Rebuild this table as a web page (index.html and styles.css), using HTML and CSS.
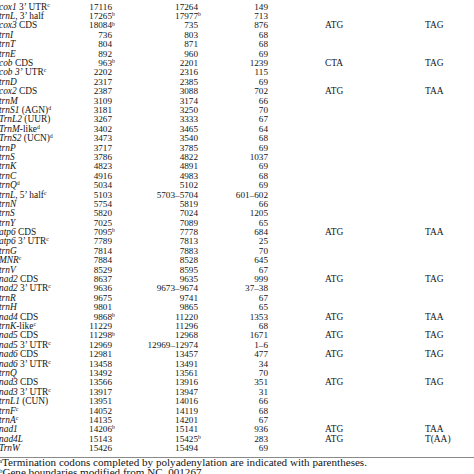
FILE: index.html
```html
<!DOCTYPE html>
<html lang="en">
<head>
<meta charset="utf-8">
<title>Mitochondrial genome annotation</title>
<link rel="stylesheet" href="styles.css">
</head>
<body>
<div class="sheet">
  <div class="genes">
    <div class="row"><span class="name"><i>cox1</i> CDS</span><span class="n">15475</span><span class="n">17115</span><span class="n">1641</span><span class="init">TTG</span><span class="term">TAG</span></div>
    <div class="row"><span class="name"><i>cox1</i> 3’ UTR<sup>c</sup></span><span class="n">17116</span><span class="n">17264</span><span class="n">149</span></div>
    <div class="row"><span class="name"><i>trnL</i>, 3’ half</span><span class="n">17265<sup>b</sup></span><span class="n">17977<sup>b</sup></span><span class="n">713</span></div>
    <div class="row"><span class="name"><i>cox3</i> CDS</span><span class="n">18084<sup>b</sup></span><span class="n">735</span><span class="n">876</span><span class="init">ATG</span><span class="term">TAG</span></div>
    <div class="row"><span class="name"><i>trnI</i></span><span class="n">736</span><span class="n">803</span><span class="n">68</span></div>
    <div class="row"><span class="name"><i>trnT</i></span><span class="n">804</span><span class="n">871</span><span class="n">68</span></div>
    <div class="row"><span class="name"><i>trnE</i></span><span class="n">892</span><span class="n">960</span><span class="n">69</span></div>
    <div class="row"><span class="name"><i>cob</i> CDS</span><span class="n">963<sup>b</sup></span><span class="n">2201</span><span class="n">1239</span><span class="init">CTA</span><span class="term">TAG</span></div>
    <div class="row"><span class="name"><i>cob 3’</i> UTR<sup>c</sup></span><span class="n">2202</span><span class="n">2316</span><span class="n">115</span></div>
    <div class="row"><span class="name"><i>trnD</i></span><span class="n">2317</span><span class="n">2385</span><span class="n">69</span></div>
    <div class="row"><span class="name"><i>cox2</i> CDS</span><span class="n">2387</span><span class="n">3088</span><span class="n">702</span><span class="init">ATG</span><span class="term">TAA</span></div>
    <div class="row"><span class="name"><i>trnM</i></span><span class="n">3109</span><span class="n">3174</span><span class="n">66</span></div>
    <div class="row"><span class="name"><i>trnS1</i> (AGN)<sup>d</sup></span><span class="n">3181</span><span class="n">3250</span><span class="n">70</span></div>
    <div class="row"><span class="name"><i>TrnL2</i> (UUR)</span><span class="n">3267</span><span class="n">3333</span><span class="n">67</span></div>
    <div class="row"><span class="name"><i>TrnM</i>-like<sup>d</sup></span><span class="n">3402</span><span class="n">3465</span><span class="n">64</span></div>
    <div class="row"><span class="name"><i>TrnS2</i> (UCN)<sup>d</sup></span><span class="n">3473</span><span class="n">3540</span><span class="n">68</span></div>
    <div class="row"><span class="name"><i>trnP</i></span><span class="n">3717</span><span class="n">3785</span><span class="n">69</span></div>
    <div class="row"><span class="name"><i>trnS</i></span><span class="n">3786</span><span class="n">4822</span><span class="n">1037</span></div>
    <div class="row"><span class="name"><i>trnK</i></span><span class="n">4823</span><span class="n">4891</span><span class="n">69</span></div>
    <div class="row"><span class="name"><i>trnC</i></span><span class="n">4916</span><span class="n">4983</span><span class="n">68</span></div>
    <div class="row"><span class="name"><i>trnQ</i><sup>d</sup></span><span class="n">5034</span><span class="n">5102</span><span class="n">69</span></div>
    <div class="row"><span class="name"><i>trnL</i>, 5’ half<sup>c</sup></span><span class="n">5103</span><span class="n">5703–5704</span><span class="n">601–602</span></div>
    <div class="row"><span class="name"><i>trnN</i></span><span class="n">5754</span><span class="n">5819</span><span class="n">66</span></div>
    <div class="row"><span class="name"><i>trnS</i></span><span class="n">5820</span><span class="n">7024</span><span class="n">1205</span></div>
    <div class="row"><span class="name"><i>trnY</i></span><span class="n">7025</span><span class="n">7089</span><span class="n">65</span></div>
    <div class="row"><span class="name"><i>atp6</i> CDS</span><span class="n">7095<sup>b</sup></span><span class="n">7778</span><span class="n">684</span><span class="init">ATG</span><span class="term">TAA</span></div>
    <div class="row"><span class="name"><i>atp6</i> 3’ UTR<sup>c</sup></span><span class="n">7789</span><span class="n">7813</span><span class="n">25</span></div>
    <div class="row"><span class="name"><i>trnG</i></span><span class="n">7814</span><span class="n">7883</span><span class="n">70</span></div>
    <div class="row"><span class="name"><i>MNR</i><sup>c</sup></span><span class="n">7884</span><span class="n">8528</span><span class="n">645</span></div>
    <div class="row"><span class="name"><i>trnV</i></span><span class="n">8529</span><span class="n">8595</span><span class="n">67</span></div>
    <div class="row"><span class="name"><i>nad2</i> CDS</span><span class="n">8637</span><span class="n">9635</span><span class="n">999</span><span class="init">ATG</span><span class="term">TAG</span></div>
    <div class="row"><span class="name"><i>nad2</i> 3’ UTR<sup>c</sup></span><span class="n">9636</span><span class="n">9673–9674</span><span class="n">37–38</span></div>
    <div class="row"><span class="name"><i>trnR</i></span><span class="n">9675</span><span class="n">9741</span><span class="n">67</span></div>
    <div class="row"><span class="name"><i>trnH</i></span><span class="n">9801</span><span class="n">9865</span><span class="n">65</span></div>
    <div class="row"><span class="name"><i>nad4</i> CDS</span><span class="n">9868<sup>b</sup></span><span class="n">11220</span><span class="n">1353</span><span class="init">ATG</span><span class="term">TAA</span></div>
    <div class="row"><span class="name"><i>trnK</i>-like<sup>c</sup></span><span class="n">11229</span><span class="n">11296</span><span class="n">68</span></div>
    <div class="row"><span class="name"><i>nad5</i> CDS</span><span class="n">11298<sup>b</sup></span><span class="n">12968</span><span class="n">1671</span><span class="init">ATG</span><span class="term">TAG</span></div>
    <div class="row"><span class="name"><i>nad5</i> 3’ UTR<sup>c</sup></span><span class="n">12969</span><span class="n">12969–12974</span><span class="n">1–6</span></div>
    <div class="row"><span class="name"><i>nad6</i> CDS</span><span class="n">12981</span><span class="n">13457</span><span class="n">477</span><span class="init">ATG</span><span class="term">TAG</span></div>
    <div class="row"><span class="name"><i>nad6</i> 3’ UTR<sup>c</sup></span><span class="n">13458</span><span class="n">13491</span><span class="n">34</span></div>
    <div class="row"><span class="name"><i>trnQ</i></span><span class="n">13492</span><span class="n">13561</span><span class="n">70</span></div>
    <div class="row"><span class="name"><i>nad3</i> CDS</span><span class="n">13566</span><span class="n">13916</span><span class="n">351</span><span class="init">ATG</span><span class="term">TAG</span></div>
    <div class="row"><span class="name"><i>nad3</i> 3’ UTR<sup>c</sup></span><span class="n">13917</span><span class="n">13947</span><span class="n">31</span></div>
    <div class="row"><span class="name"><i>trnL1</i> (CUN)</span><span class="n">13951</span><span class="n">14016</span><span class="n">66</span></div>
    <div class="row"><span class="name"><i>trnF</i><sup>c</sup></span><span class="n">14052</span><span class="n">14119</span><span class="n">68</span></div>
    <div class="row"><span class="name"><i>trnA</i><sup>c</sup></span><span class="n">14135</span><span class="n">14201</span><span class="n">67</span></div>
    <div class="row"><span class="name"><i>nad1</i></span><span class="n">14206<sup>b</sup></span><span class="n">15141</span><span class="n">936</span><span class="init">ATG</span><span class="term">TAA</span></div>
    <div class="row"><span class="name"><i>nad4L</i></span><span class="n">15143</span><span class="n">15425<sup>b</sup></span><span class="n">283</span><span class="init">ATG</span><span class="term">T(AA)</span></div>
    <div class="row"><span class="name"><i>TrnW</i></span><span class="n">15426</span><span class="n">15494</span><span class="n">69</span></div>
  </div>
  <div class="notes">
    <p><sup>a</sup>Termination codons completed by polyadenylation are indicated with parentheses.</p>
    <p><sup>b</sup>Gene boundaries modified from NC_001267.</p>
  </div>
</div>
</body>
</html>
```

FILE: styles.css
```css
html, body {
  margin: 0;
  padding: 0;
  background: #ffffff;
}

body {
  width: 474px;
  height: 474px;
  overflow: hidden;
  font-family: "Liberation Serif", "Times New Roman", serif;
  color: #141414;
}

.sheet {
  margin-top: -6.7px;
  margin-left: -1px;
}

.genes {
  font-size: 9.4px;
  line-height: 9.4px;
}

.row {
  display: grid;
  grid-template-columns: 65px 48px 86px 70px 157px auto;
  height: 9.4px;
  white-space: nowrap;
}

.name {
  text-align: left;
}

.n {
  text-align: right;
  font-size: 9.2px;
}

.init {
  padding-left: 57px;
}

.term {
  text-align: left;
}

sup {
  font-size: 0.62em;
  line-height: 0;
  vertical-align: 0.5em;
}

.n sup {
  display: inline-block;
  width: 0;
}

.notes {
  margin-top: 4px;
  border-top: 1px solid #8a8a8a;
  font-size: 11.1px;
  line-height: 9.4px;
}

.notes p {
  margin: 0;
}
```
